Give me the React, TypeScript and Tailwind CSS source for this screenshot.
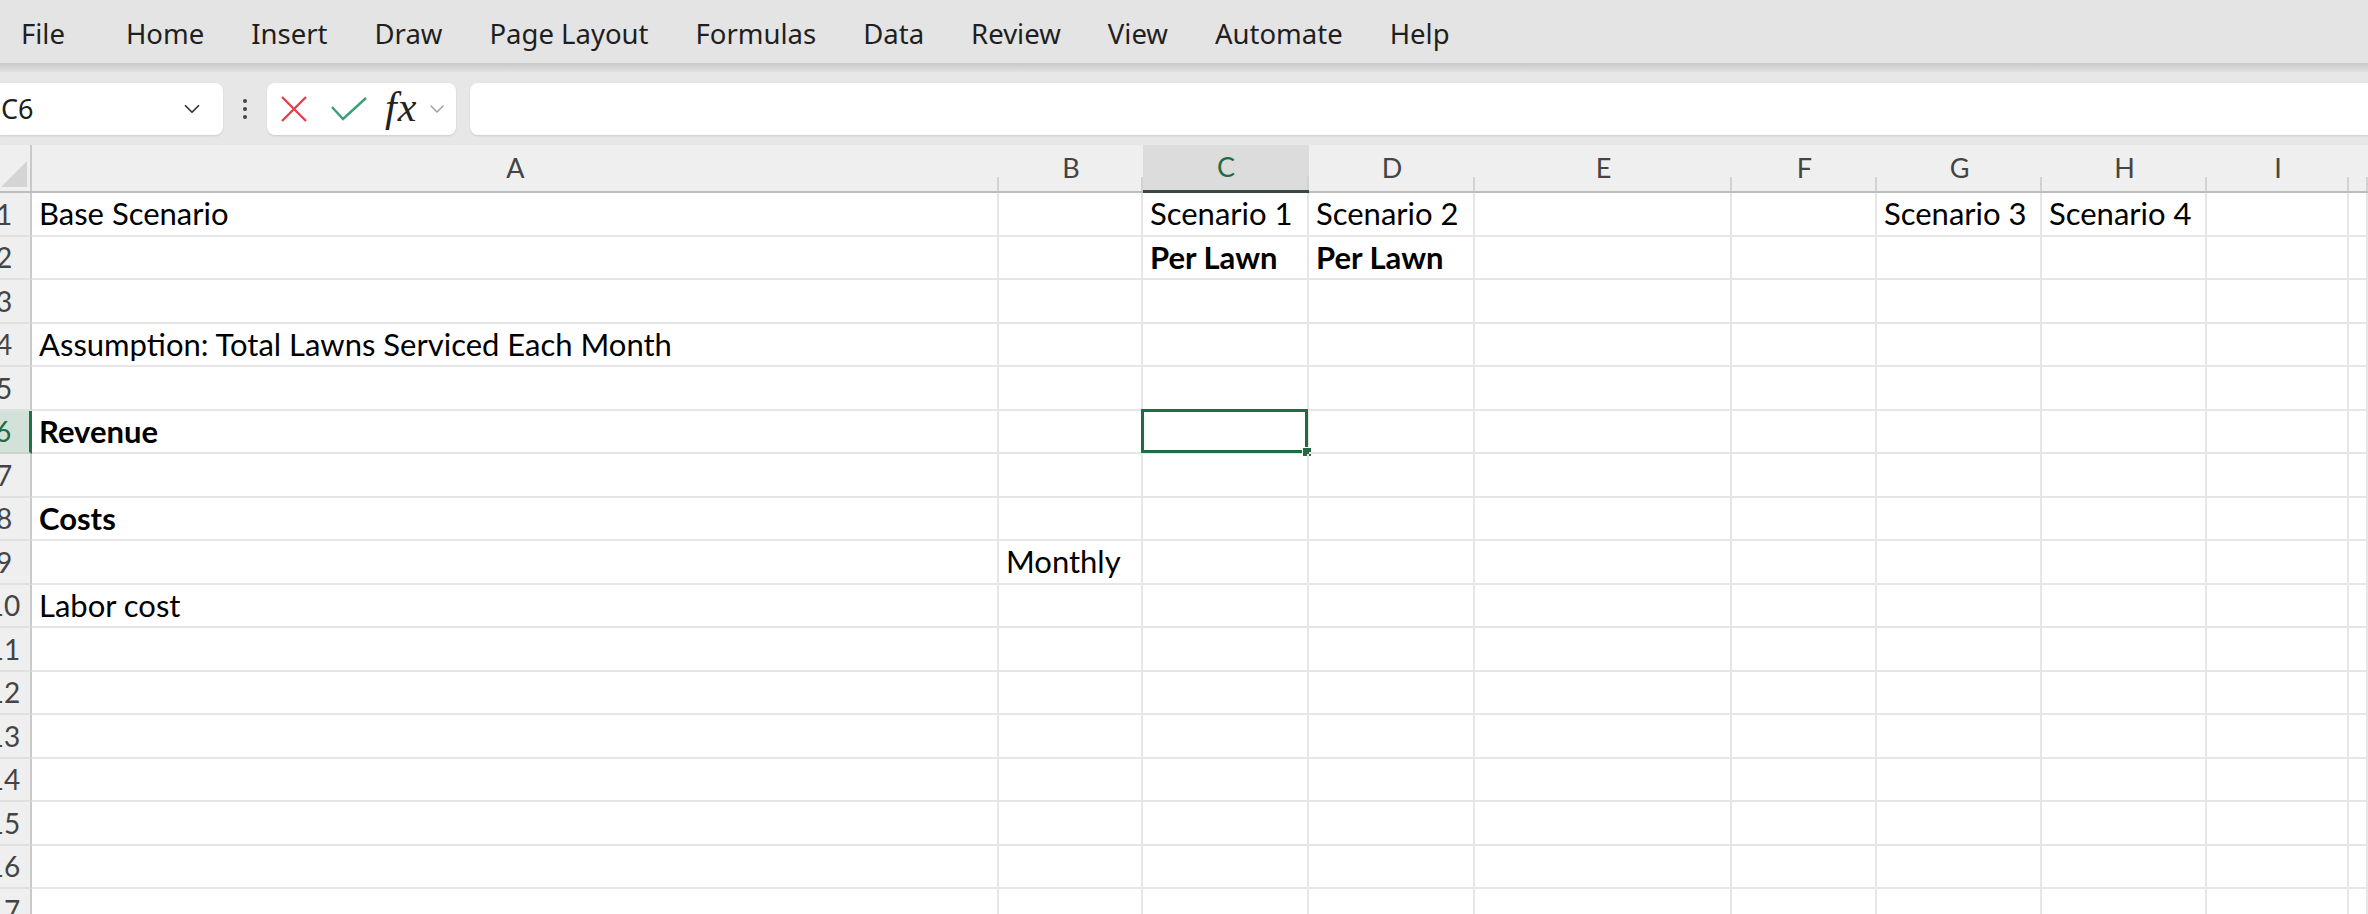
import { ChevronDown } from "lucide-react";

/* ── sheet data ─────────────────────────────────────────── */
const COLS = ["A", "B", "C", "D", "E", "F", "G", "H", "I", ""];
const MENU = ["File", "Home", "Insert", "Draw", "Page Layout", "Formulas", "Data", "Review", "View", "Automate", "Help"];

type Cell = { text: string; bold?: boolean };
const CELLS: Record<string, Cell> = {
  A1: { text: "Base Scenario" },
  C1: { text: "Scenario 1" },
  D1: { text: "Scenario 2" },
  G1: { text: "Scenario 3" },
  H1: { text: "Scenario 4" },
  C2: { text: "Per Lawn", bold: true },
  D2: { text: "Per Lawn", bold: true },
  A4: { text: "Assumption: Total Lawns Serviced Each Month" },
  A6: { text: "Revenue", bold: true },
  A8: { text: "Costs", bold: true },
  B9: { text: "Monthly" },
  A10: { text: "Labor cost" },
};

const ROWS = Array.from({ length: 17 }, (_, i) => i + 1);
const GRID = "grid grid-cols-[32px_967px_144px_166px_166px_257px_145px_165px_165px_142px_1fr]";

function MenuBar() {
  return (
    <div className="h-[63px] bg-[#e4e4e4] flex items-center pt-[4px] pl-[21px] gap-[47px] text-[27.5px] text-[#1f1f1f] font-['Noto_Sans',sans-serif]">
      {MENU.map((m, i) => (
        <span key={m} className={i === 0 ? "mr-[14px]" : ""}>
          {m}
        </span>
      ))}
    </div>
  );
}

function FormulaBar() {
  return (
    <>
      <div className="h-[9px] bg-gradient-to-b from-[#c8c8c8] to-[#e2e2e2]" />
      <div className="h-[73px] bg-[#e7e7e7] flex items-start pt-[11px]">
        {/* name box */}
        <div className="w-[223px] h-[52px] bg-white rounded-r-lg shadow-[0_1px_2px_rgba(0,0,0,0.12)] flex items-center justify-between pr-[18px] text-[27px] text-[#202020] font-['Noto_Sans',sans-serif]">
          <span className="ml-[1px]">C6</span>
          <ChevronDown className="w-[26px] h-[26px] text-[#333]" strokeWidth={1.6} />
        </div>
        <div className="w-[44px] h-[52px] flex flex-col items-center justify-center gap-[4px]">
          <span className="w-[4px] h-[4px] rounded-full bg-[#444]" />
          <span className="w-[4px] h-[4px] rounded-full bg-[#444]" />
          <span className="w-[4px] h-[4px] rounded-full bg-[#444]" />
        </div>
        {/* cancel / enter / fx */}
        <div className="w-[189px] h-[52px] bg-white rounded-lg shadow-[0_1px_2px_rgba(0,0,0,0.12)] flex items-center pl-[13px]">
          <svg width="28" height="28" viewBox="0 0 28 28" className="shrink-0">
            <path d="M2 2 L26 26 M26 2 L2 26" stroke="#e5404e" strokeWidth="2.4" fill="none" />
          </svg>
          <svg width="38" height="26" viewBox="0 0 38 26" className="ml-[22px] shrink-0">
            <path d="M2 11 L13 23 L36 2" stroke="#3d9f74" strokeWidth="2.4" fill="none" />
          </svg>
          <span className="ml-[17px] text-[42px] leading-none italic tracking-[1px] text-[#222] -mt-[4px] font-['Liberation_Serif',serif]">
            fx
          </span>
          <ChevronDown className="ml-[8px] w-[24px] h-[24px] text-[#9a9a9a]" strokeWidth={1.4} />
        </div>
        <div className="ml-[14px] flex-1 h-[52px] bg-white rounded-l-lg shadow-[0_1px_2px_rgba(0,0,0,0.12)]" />
      </div>
    </>
  );
}

function HeaderRow() {
  return (
    <div className={`${GRID} h-[48px] bg-[#efefef] border-b-2 border-[#bdbdbd]`}>
      <div className="flex items-end justify-end pb-[4px] pr-[3px] border-r-2 border-[#c9c9c9]">
        <svg width="26" height="26" viewBox="0 0 26 26">
          <path d="M26 0 L26 26 L0 26 Z" fill="#d4d4d4" />
        </svg>
      </div>
      {COLS.map((c, i) => {
        const sel = c === "C";
        return (
          <div
            key={i}
            className={
              sel
                ? "relative flex items-center justify-center bg-[#dcdcdc] text-[#1e6b45] border-b-[3px] border-[#3b4a41] -mb-[2px]"
                : "relative flex items-center justify-center text-[#444]"
            }
          >
            <span className="text-[27px] font-['Lato',sans-serif]">{c}</span>
            <span className="absolute right-0 bottom-0 w-[2px] h-[14px] bg-[#d3d3d3]" />
          </div>
        );
      })}
    </div>
  );
}

function SheetRow({ r }: { r: number }) {
  const selRow = r === 6;
  return (
    <div className={`${GRID} h-[43.5px]`}>
      <div
        className={
          selRow
            ? "overflow-hidden flex justify-end bg-[#d3e2d9] text-[#1e6b45] border-r-[3px] border-[#217346] border-b-2 border-b-[#c9d6cf]"
            : "overflow-hidden flex justify-end bg-[#efefef] text-[#444] border-r-2 border-[#c9c9c9] border-b-2 border-b-[#e0e0e0]"
        }
      >
        <div className="w-[52px] shrink-0 flex items-center justify-center text-[28px] font-['Lato',sans-serif]">
          {r}
        </div>
      </div>
      {COLS.map((c, i) => {
        const cell = c ? CELLS[`${c}${r}`] : undefined;
        const selected = c === "C" && r === 6;
        return (
          <div
            key={i}
            className="relative flex items-center pl-[7px] border-r-2 border-b-2 border-[#e6e6e6] whitespace-nowrap"
          >
            {cell && (
              <span
                className={`text-[31px] leading-none text-black font-['Lato',sans-serif] ${cell.bold ? "font-bold" : ""}`}
              >
                {cell.text}
              </span>
            )}
            {selected && (
              <>
                <span className="absolute -left-[2px] -top-[2px] -right-[1px] -bottom-[1px] border-[3px] border-[#1e6b45]" />
                <span className="absolute -right-[5px] -bottom-[5px] w-[10px] h-[10px] bg-[#1e6b45] border border-white" />
              </>
            )}
          </div>
        );
      })}
    </div>
  );
}

export default function App() {
  return (
    <div className="w-[2368px] h-[914px] overflow-hidden bg-white">
      <MenuBar />
      <FormulaBar />
      <HeaderRow />
      {ROWS.map((r) => (
        <SheetRow key={r} r={r} />
      ))}
    </div>
  );
}
